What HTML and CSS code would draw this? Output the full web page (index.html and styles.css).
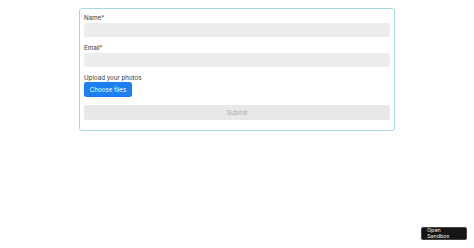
FILE: index.html
```html
<!DOCTYPE html>
<html>
<head>
<meta charset="utf-8">
<link rel="stylesheet" href="styles.css">
</head>
<body>
<form class="card">
  <div class="field">
    <label class="label">Name*</label>
    <div class="input"></div>
  </div>
  <div class="field">
    <label class="label">Email*</label>
    <div class="input"></div>
  </div>
  <div class="field upload">
    <label class="label">Upload your photos</label>
    <div class="choose">Choose files</div>
  </div>
  <div class="submit">Submit</div>
</form>
<div class="sandbox">Open<br>Sandbox</div>
</body>
</html>
```
FILE: styles.css
```css
html, body { margin: 0; padding: 0; background: #fff; }
body {
  font-family: "Inter", "Roboto", "Liberation Sans", sans-serif;
  font-size: 6.2px;
  color: #333;
  height: 248px;
  position: relative;
}
.card {
  box-sizing: border-box;
  width: 316px;
  margin: 8px auto 0;
  border: 1px solid #a9d8e4;
  border-radius: 3px;
  padding: 4px 4px 10px;
}
.field { margin-bottom: 6px; }
.label { display: block; line-height: 9px; margin-bottom: 1px; }
.input {
  height: 14px;
  background: #ededed;
  border-radius: 2px;
}
.upload { margin-bottom: 8px; }
.upload .label { margin-bottom: 0; }
.choose {
  display: inline-block;
  box-sizing: border-box;
  width: 48px;
  height: 15px;
  line-height: 15px;
  text-align: center;
  background: #1b7ff5;
  color: #fff;
  border-radius: 2.5px;
}
.submit {
  height: 15px;
  line-height: 15px;
  text-align: center;
  background: #e8e8e8;
  color: #a9a9a9;
  border-radius: 2px;
}
.sandbox {
  position: absolute;
  left: 421px;
  top: 227px;
  width: 46px;
  height: 13px;
  box-sizing: border-box;
  padding: 0 0 0 5px;
  background: #151515;
  border: 1px solid #444;
  border-radius: 2px;
  color: #eee;
  font-size: 5.4px;
  line-height: 5.6px;
}
```
